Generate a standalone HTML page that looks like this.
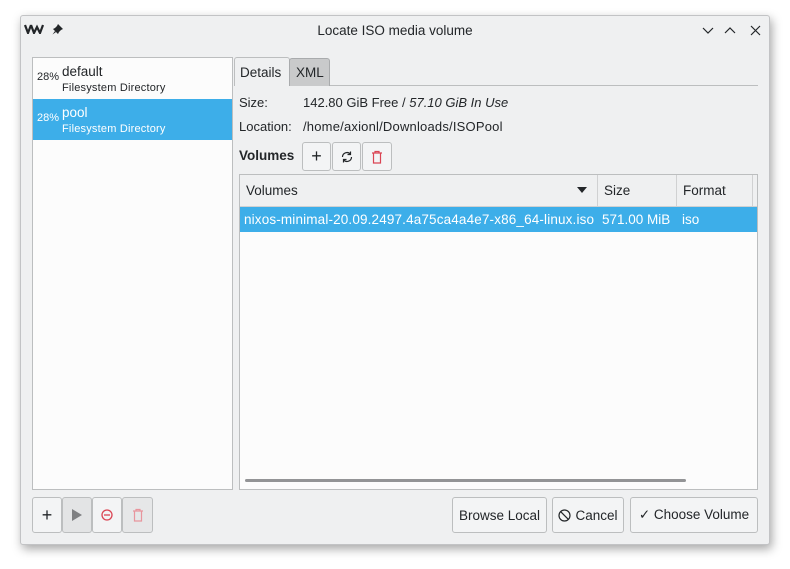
<!DOCTYPE html>
<html><head><style>
*{box-sizing:border-box;margin:0;padding:0}
body{width:790px;height:569px;background:#fff;font-family:"Liberation Sans",sans-serif;font-size:13px;color:#232629;position:relative;overflow:hidden}
.a{position:absolute}
.win{left:20px;top:15px;width:750px;height:530px;background:#eff0f1;border:1px solid #c2c3c5;border-radius:3px;box-shadow:2px 4px 10px rgba(0,0,0,.35)}
.btn{position:absolute;background:#f3f4f5;border:1px solid #bcbebf;border-radius:3px;display:flex;align-items:center;justify-content:center;font-size:13.5px}
.t{position:absolute;white-space:nowrap}
</style></head><body>
<div class="a win"></div>
<svg class="a" style="left:24px;top:24px" width="20" height="10" fill="none" stroke="#232629" stroke-width="2.2"><path d="M1 1l3 8 3-8M7 1l3 8 3-6 3 6 3-8"/></svg>
<svg class="a" style="left:52px;top:23px" width="12" height="12" fill="#232629"><path d="M6 1l5 5-2 1-2 2-1 2-5-5 2-1 2-2z"/><path d="M3 8l-2.5 3.5L4 9" /></svg>
<div class="t" style="left:0;width:790px;text-align:center;top:23px;font-size:13.5px">Locate ISO media volume</div>
<svg class="a" style="left:700px;top:24px" width="64" height="14" stroke="#232629" stroke-width="1.2" fill="none"><path d="M3 4l5 5 5-5M25 9l5-5 5 5M51 2l9 9M60 2l-9 9"/></svg>

<div class="a" style="left:32px;top:57px;width:201px;height:433px;background:#fcfcfc;border:1px solid #bcbebf"></div>
<div class="a" style="left:33px;top:99px;width:199px;height:41px;background:#3daee9"></div>
<div class="t" style="left:37px;top:71px;font-size:11px">28%</div>
<div class="t" style="left:62px;top:64px;font-size:13.5px">default</div>
<div class="t" style="left:62px;top:82px;font-size:11px;letter-spacing:0.2px">Filesystem Directory</div>
<div class="t" style="left:37px;top:112px;font-size:11px;color:#fff">28%</div>
<div class="t" style="left:62px;top:105px;font-size:13.5px;color:#fff">pool</div>
<div class="t" style="left:62px;top:123px;font-size:11px;color:#fff;letter-spacing:0.2px">Filesystem Directory</div>

<div class="a" style="left:289px;top:85px;width:469px;height:1px;background:#bcbebf"></div>
<div class="a" style="left:234px;top:57px;width:56px;height:29px;border:1px solid #bcbebf;border-bottom:none;border-radius:3px 3px 0 0;background:#eff0f1"></div>
<div class="a" style="left:289px;top:58px;width:41px;height:28px;border:1px solid #a9abad;border-bottom:none;border-radius:3px 3px 0 0;background:#c9cacb"></div>
<div class="t" style="left:240px;top:65px;font-size:13.5px">Details</div>
<div class="t" style="left:296px;top:65px;font-size:13.5px">XML</div>

<div class="t" style="left:239px;top:95px">Size:</div>
<div class="t" style="left:303px;top:95px">142.80 GiB Free / <i>57.10 GiB In Use</i></div>
<div class="t" style="left:239px;top:119px">Location:</div>
<div class="t" style="left:303px;top:119px;letter-spacing:0.2px">/home/axionl/Downloads/ISOPool</div>
<div class="t" style="left:239px;top:148px;font-weight:bold;font-size:13.5px">Volumes</div>
<div class="btn" style="left:302px;top:142px;width:29px;height:29px;font-size:18px">+</div>
<div class="btn" style="left:332px;top:142px;width:29px;height:29px"><svg width="14" height="14" fill="none" stroke="#232629" stroke-width="1.2"><path d="M2.5 7a4.5 4.5 0 0 1 8-2.8M11.5 7a4.5 4.5 0 0 1-8 2.8"/><path d="M10.5 1.5v3h-3M3.5 12.5v-3h3"/></svg></div>
<div class="btn" style="left:362px;top:142px;width:30px;height:29px"><svg width="12" height="14" fill="none" stroke="#da4453" stroke-width="1.2"><path d="M1 3h10M4 3V1.5h4V3M2.5 3v10h7V3"/></svg></div>

<div class="a" style="left:239px;top:174px;width:519px;height:316px;background:#fcfcfc;border:1px solid #bcbebf"></div>
<div class="a" style="left:240px;top:175px;width:517px;height:32px;background:#eff0f1;border-bottom:1px solid #d0d1d2"></div>
<div class="a" style="left:597px;top:175px;width:1px;height:32px;background:#d0d1d2"></div>
<div class="a" style="left:676px;top:175px;width:1px;height:32px;background:#d0d1d2"></div>
<div class="a" style="left:752px;top:175px;width:1px;height:32px;background:#d0d1d2"></div>
<div class="t" style="left:246px;top:183px;font-size:13.5px">Volumes</div>
<svg class="a" style="left:577px;top:187px" width="10" height="6"><path d="M0 0h10L5 6z" fill="#232629"/></svg>
<div class="t" style="left:604px;top:183px;font-size:13.5px">Size</div>
<div class="t" style="left:683px;top:183px;font-size:13.5px">Format</div>
<div class="a" style="left:240px;top:207px;width:517px;height:25px;background:#3daee9"></div>
<div class="t" style="left:244px;top:212px;color:#fff;font-size:13.5px;letter-spacing:0.15px">nixos-minimal-20.09.2497.4a75ca4a4e7-x86_64-linux.iso</div>
<div class="t" style="left:602px;top:212px;color:#fff;font-size:13.5px">571.00 MiB</div>
<div class="t" style="left:682px;top:212px;color:#fff;font-size:13.5px">iso</div>
<div class="a" style="left:245px;top:479px;width:441px;height:3px;border-radius:2px;background:#939496"></div>

<div class="btn" style="left:32px;top:497px;width:30px;height:36px;font-size:18px">+</div>
<div class="btn" style="left:62px;top:497px;width:30px;height:36px;background:#e3e4e5"><svg width="10" height="12"><path d="M0 0l10 6-10 6z" fill="#7f8082"/></svg></div>
<div class="btn" style="left:92px;top:497px;width:30px;height:36px"><svg width="12" height="12" fill="none" stroke="#da4453" stroke-width="1.3"><circle cx="6" cy="6" r="5"/><path d="M3 6h6"/></svg></div>
<div class="btn" style="left:122px;top:497px;width:31px;height:36px;background:#e6e7e8"><svg width="12" height="14" fill="none" stroke="#e8959d" stroke-width="1.2"><path d="M1 3h10M4 3V1.5h4V3M2.5 3v10h7V3"/></svg></div>
<div class="btn" style="left:452px;top:497px;width:95px;height:36px">Browse Local</div>
<div class="btn" style="left:552px;top:497px;width:72px;height:36px"><svg width="13" height="13" fill="none" stroke="#232629" stroke-width="1.2" style="margin-right:4px"><circle cx="6.5" cy="6.5" r="5.5"/><path d="M2.7 2.7l7.6 7.6"/></svg>Cancel</div>
<div class="btn" style="left:630px;top:497px;width:128px;height:36px">✓ Choose Volume</div>
</body></html>
